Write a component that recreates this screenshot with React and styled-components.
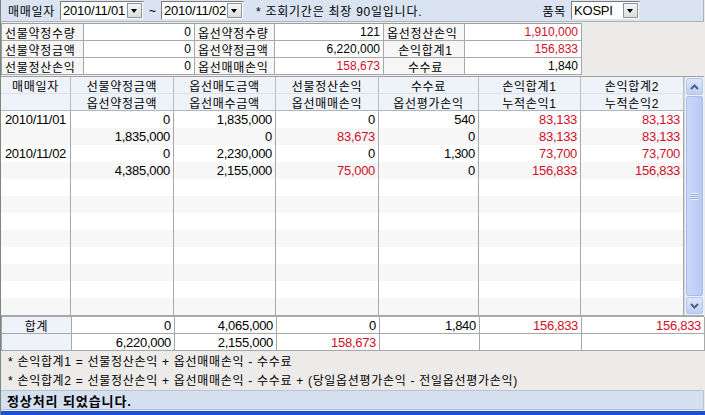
import React from 'react'
import styled, { createGlobalStyle, css } from 'styled-components'

const GlobalStyle = createGlobalStyle`
  html, body { margin: 0; padding: 0; background: #ecebe9; }
  body {
    font-family: "Liberation Sans", "Noto Sans CJK KR", sans-serif;
    font-size: 12px;
    color: #000;
  }
`

const RED = '#d0102a'

const summary = [
  [['선물약정수량', '0'], ['옵선약정수량', '121'], ['옵선정산손익', '1,910,000', true]],
  [['선물약정금액', '0'], ['옵선약정금액', '6,220,000'], ['손익합계1', '156,833', true]],
  [['선물정산손익', '0'], ['옵선매매손익', '158,673', true], ['수수료', '1,840']],
]

const headTop = ['매매일자', '선물약정금액', '옵선매도금액', '선물정산손익', '수수료', '손익합계1', '손익합계2']
const headBottom = ['', '옵선약정금액', '옵선매수금액', '옵선매매손익', '옵선평가손익', '누적손익1', '누적손익2']

// [text, red]
const rows = [
  [['2010/11/01'], ['0'], ['1,835,000'], ['0'], ['540'], ['83,133', 1], ['83,133', 1]],
  [[''], ['1,835,000'], ['0'], ['83,673', 1], ['0'], ['83,133', 1], ['83,133', 1]],
  [['2010/11/02'], ['0'], ['2,230,000'], ['0'], ['1,300'], ['73,700', 1], ['73,700', 1]],
  [[''], ['4,385,000'], ['2,155,000'], ['75,000', 1], ['0'], ['156,833', 1], ['156,833', 1]],
]

const totals = [
  [['합계'], ['0'], ['4,065,000'], ['0'], ['1,840'], ['156,833', 1], ['156,833', 1]],
  [[''], ['6,220,000'], ['2,155,000'], ['158,673', 1], [''], [''], ['']],
]

const COLS = '70px 103px 102px 103px 100px 102px 103px'
const TOTAL_COLS = '70px 103px 102px 103px 100px 102px 123px'

export default function App() {
  const bodyRows = [...rows]
  while (bodyRows.length < 12) bodyRows.push(Array(7).fill(['']))

  return (
    <Window>
      <GlobalStyle />
      <TopBar>
        <Label>매매일자</Label>
        <Combo $width={84}>
          <span>2010/11/01</span>
          <DropButton />
        </Combo>
        <Tilde>~</Tilde>
        <Combo $width={83}>
          <span>2010/11/02</span>
          <DropButton />
        </Combo>
        <Hint>* 조회기간은 최장 90일입니다.</Hint>
        <Spacer />
        <Label>품목</Label>
        <Combo $width={69}>
          <span>KOSPI</span>
          <DropButton />
        </Combo>
      </TopBar>

      <Summary>
        {summary.map((row, i) =>
          row.map(([label, value, red], j) => (
            <React.Fragment key={`${i}-${j}`}>
              <SumLabel $center={j === 2 && i > 0}>{label}</SumLabel>
              <SumValue $red={red}>{value}</SumValue>
            </React.Fragment>
          ))
        )}
      </Summary>

      <GridArea>
        <GridMain>
          <Grid $cols={COLS}>
            {headTop.map((h, i) => <HeadCell key={`t${i}`} $top>{h}</HeadCell>)}
            {headBottom.map((h, i) => <HeadCell key={`b${i}`}>{h}</HeadCell>)}
          </Grid>
          <Grid $cols={COLS}>
            {bodyRows.map((row, r) =>
              row.map(([text, red], c) => (
                <Cell key={`${r}-${c}`} $stripe={r % 2 === 1} $first={c === 0} $red={red}>
                  {text}
                </Cell>
              ))
            )}
          </Grid>
        </GridMain>
        <ScrollBar>
          <ScrollButton>
            <Chevron viewBox="0 0 9 6"><path d="M1 5 L4.5 1.5 L8 5" /></Chevron>
          </ScrollButton>
          <ScrollThumb>
            <Grip />
          </ScrollThumb>
          <ScrollButton>
            <Chevron viewBox="0 0 9 6"><path d="M1 1 L4.5 4.5 L8 1" /></Chevron>
          </ScrollButton>
        </ScrollBar>
      </GridArea>

      <TotalGrid $cols={TOTAL_COLS}>
        {totals.map((row, r) =>
          row.map(([text, red], c) => (
            <TotalCell key={`${r}-${c}`} $label={c === 0} $red={red}>
              {text}
            </TotalCell>
          ))
        )}
      </TotalGrid>

      <Notes>
        <Note>* 손익합계1 = 선물정산손익 + 옵선매매손익 - 수수료</Note>
        <Note>* 손익합계2 = 선물정산손익 + 옵선매매손익 - 수수료 + (당일옵션평가손익 - 전일옵선평가손익)</Note>
      </Notes>

      <StatusBar>정상처리 되었습니다.</StatusBar>
      <Frame />
    </Window>
  )
}

const Window = styled.div`
  width: 705px;
  height: 415px;
  box-sizing: border-box;
  border-left: 1px solid #7a8a7a;
  background: #ecebe9;
  display: flex;
  flex-direction: column;
  overflow: hidden;
`

const TopBar = styled.div`
  height: 25px;
  width: 703px;
  box-sizing: border-box;
  background: #d9e3f2;
  border-bottom: 1px solid #a9b3c0;
  border-right: 1px solid #a9b3c0;
  display: flex;
  align-items: center;
  padding: 0 63px 0 7px;
`

const Label = styled.span`
  letter-spacing: 0.7px;
  margin-right: 5px;
`

const Combo = styled.div`
  width: ${p => p.$width}px;
  height: 19px;
  box-sizing: border-box;
  background: #fff;
  border: 1px solid;
  border-color: #7b7b7b #e4e4e4 #e4e4e4 #7b7b7b;
  display: flex;
  align-items: center;
  justify-content: space-between;
  padding-left: 2px;
  font-size: 13px;
  letter-spacing: -0.2px;
`

const DropButton = styled.div`
  width: 15px;
  height: 15px;
  margin-right: 1px;
  box-sizing: border-box;
  background: linear-gradient(#f7f7f7, #dcdcdc);
  border: 1px solid #8c94a0;
  position: relative;
  &::after {
    content: '';
    position: absolute;
    left: 3px;
    top: 5px;
    border-left: 3.5px solid transparent;
    border-right: 3.5px solid transparent;
    border-top: 4px solid #000;
  }
`

const Tilde = styled.span`
  margin: 0 5px 0 5px;
`

const Hint = styled.span`
  margin-left: 12px;
  letter-spacing: 0.75px;
`

const Spacer = styled.div`
  flex: 1;
`

const Summary = styled.div`
  margin-top: 1px;
  display: grid;
  grid-template-columns: 82px 111px 80px 109px 81px 117px;
  grid-auto-rows: 17px;
  width: 580px;
  border-top: 1px solid #a0a0a0;
  border-left: 1px solid #a0a0a0;
`

const cellBase = css`
  box-sizing: border-box;
  border-right: 1px solid #a8a8a8;
  border-bottom: 1px solid #a8a8a8;
  display: flex;
  align-items: center;
  white-space: nowrap;
  overflow: hidden;
`

const SumLabel = styled.div`
  ${cellBase}
  background: #f6f6f6;
  padding-left: 3px;
  letter-spacing: 0.7px;
  justify-content: ${p => (p.$center ? 'center' : 'flex-start')};
`

const SumValue = styled.div`
  ${cellBase}
  background: #fff;
  justify-content: flex-end;
  padding-right: 3px;
  color: ${p => (p.$red ? RED : '#000')};
`

const GridArea = styled.div`
  margin-top: 1px;
  display: flex;
  width: 703px;
  border-top: 1px solid #a0a0a0;
`

const GridMain = styled.div`
  width: 683px;
  background: #fff;
`

const Grid = styled.div`
  display: grid;
  grid-template-columns: ${p => p.$cols};
  grid-auto-rows: 17px;
`

const HeadCell = styled.div`
  ${cellBase}
  height: 17px;
  background: #eef2f9;
  justify-content: center;
  letter-spacing: 0.7px;
  border-right-color: #b6bcc6;
  border-bottom-color: ${p => (p.$top ? '#dce2ec' : '#b0b6c0')};
`

const Cell = styled.div`
  ${cellBase}
  border-bottom: none;
  background: ${p => (p.$stripe ? '#f7f7f7' : '#fff')};
  justify-content: ${p => (p.$first ? 'center' : 'flex-end')};
  padding-right: ${p => (p.$first ? 0 : 3)}px;
  color: ${p => (p.$red ? RED : '#000')};
  font-size: 13px;
  letter-spacing: -0.3px;
`

const ScrollBar = styled.div`
  width: 20px;
  display: flex;
  flex-direction: column;
  background: #eef0f6;
  border-left: 1px solid #d0d6e2;
`

const ScrollButton = styled.div`
  height: 17px;
  margin: 1px;
  box-sizing: border-box;
  border: 1px solid #b5c6ea;
  border-radius: 2px;
  background: linear-gradient(#dbe6fb, #bccff5);
  display: flex;
  align-items: center;
  justify-content: center;
`

const Chevron = styled.svg`
  width: 9px;
  height: 6px;
  fill: none;
  stroke: #4d6185;
  stroke-width: 2;
`

const ScrollThumb = styled.div`
  flex: 1;
  margin: 0 1px;
  box-sizing: border-box;
  border: 1px solid #a8bdea;
  border-radius: 2px;
  background: linear-gradient(90deg, #c9d8f8, #b8cbf4);
  display: flex;
  align-items: center;
  justify-content: center;
`

const Grip = styled.div`
  width: 7px;
  height: 7px;
  background: repeating-linear-gradient(#eef3fd 0 1px, #8ea6d8 1px 2px);
`

const TotalGrid = styled.div`
  display: grid;
  grid-template-columns: ${p => p.$cols};
  grid-auto-rows: 17px;
  width: 703px;
  border-top: 2px solid #a8a8a8;
  border-left: 1px solid #a0a0a0;
  box-sizing: border-box;
`

const TotalCell = styled.div`
  ${cellBase}
  background: ${p => (p.$label ? '#eef2f9' : '#fff')};
  justify-content: ${p => (p.$label ? 'center' : 'flex-end')};
  padding-right: ${p => (p.$label ? 0 : 3)}px;
  color: ${p => (p.$red ? RED : '#000')};
  font-size: ${p => (p.$label ? 12 : 13)}px;
  letter-spacing: ${p => (p.$label ? '0.7px' : '-0.3px')};
`

const Notes = styled.div`
  display: flex;
  flex-direction: column;
  gap: 2px;
  padding: 3px 0 0 7px;
  height: 40px;
  box-sizing: border-box;
`

const Note = styled.div`
  letter-spacing: 0.7px;
  line-height: 17px;
`

const StatusBar = styled.div`
  width: 703px;
  height: 20px;
  box-sizing: border-box;
  background: #d4dff0;
  border-top: 1px solid #b9c3d2;
  border-right: 1px solid #b9c3d2;
  border-bottom: 1px solid #b9c3d2;
  display: flex;
  align-items: center;
  padding-left: 6px;
  font-weight: bold;
  font-size: 13px;
  letter-spacing: 0.9px;
`

const Frame = styled.div`
  margin-top: 1px;
  height: 4px;
  background: #1a4fd8;
`
